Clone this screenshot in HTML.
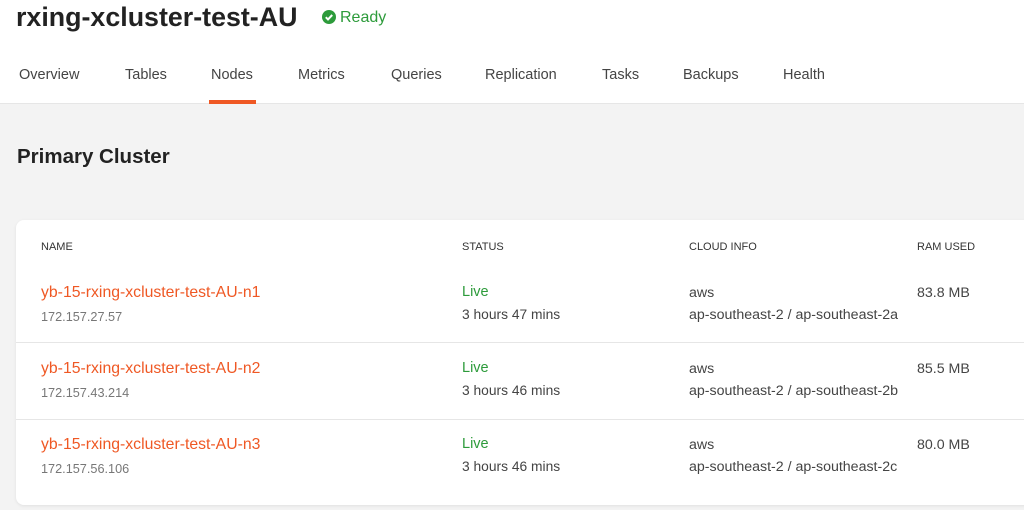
<!DOCTYPE html>
<html><head><style>
*{margin:0;padding:0;box-sizing:border-box}
body{width:1024px;height:510px;overflow:hidden;background:#f3f3f3;font-family:"Liberation Sans",sans-serif;position:relative;color:#333}
.hdr{position:absolute;left:0;top:0;width:1024px;height:104px;background:#fff;border-bottom:1px solid #e6e6e6}
.t{position:absolute;font-size:14px;white-space:nowrap}
.title{left:16px;top:2px;font-size:26.8px;font-weight:bold;color:#222}
.ready{left:340px;top:9px;font-size:16px;color:#2d9b3b}
.tab{top:67px;font-size:14.5px;color:#444}
.ul{position:absolute;left:209px;top:100px;width:47px;height:4px;background:#ef5824}
.h2{left:17px;top:145px;font-size:20.5px;font-weight:bold;color:#222}
.card{position:absolute;left:16px;top:220px;width:1020px;height:285px;background:#fff;border-radius:8px;box-shadow:0 1px 3px rgba(0,0,0,.08)}
.th{font-size:11px;color:#333;top:241px}
.hr{position:absolute;left:16px;width:1010px;height:1px;background:#e6e6e6}
.n{color:#ef5824;font-size:15.8px}
.g{color:#777;font-size:12.7px}
.live{color:#2d9b3b;font-size:14.5px}
.s{font-size:13.8px;color:#444}
.c{font-size:14.2px;color:#444}
</style></head><body>
<div class="hdr"></div>
<div class="t title">rxing-xcluster-test-AU</div>
<svg style="position:absolute;left:322px;top:10px" width="14" height="14" viewBox="0 0 14 14"><circle cx="7" cy="7" r="7" fill="#2d9b3b"/><path d="M3.8 7.2l2.2 2.2 4.2-4.4" stroke="#fff" stroke-width="2" fill="none"/></svg>
<div class="t ready">Ready</div>
<div class="t tab" style="left:19px">Overview</div>
<div class="t tab" style="left:125px">Tables</div>
<div class="t tab" style="left:211px">Nodes</div>
<div class="t tab" style="left:298px">Metrics</div>
<div class="t tab" style="left:391px">Queries</div>
<div class="t tab" style="left:485px">Replication</div>
<div class="t tab" style="left:602px">Tasks</div>
<div class="t tab" style="left:683px">Backups</div>
<div class="t tab" style="left:783px">Health</div>
<div class="ul"></div>
<div class="t h2">Primary Cluster</div>
<div class="card"></div>
<div class="t th" style="left:41px">NAME</div>
<div class="t th" style="left:462px">STATUS</div>
<div class="t th" style="left:689px">CLOUD INFO</div>
<div class="t th" style="left:917px">RAM USED</div>

<div class="t n" style="left:41px;top:284px">yb-15-rxing-xcluster-test-AU-n1</div>
<div class="t g" style="left:41px;top:310px">172.157.27.57</div>
<div class="t live" style="left:462px;top:284px">Live</div>
<div class="t s" style="left:462px;top:307px">3 hours 47 mins</div>
<div class="t c" style="left:689px;top:285px">aws</div>
<div class="t c" style="left:689px;top:307px">ap-southeast-2 / ap-southeast-2a</div>
<div class="t c" style="left:917px;top:285px">83.8 MB</div>
<div class="hr" style="top:342px"></div>

<div class="t n" style="left:41px;top:360px">yb-15-rxing-xcluster-test-AU-n2</div>
<div class="t g" style="left:41px;top:386px">172.157.43.214</div>
<div class="t live" style="left:462px;top:360px">Live</div>
<div class="t s" style="left:462px;top:383px">3 hours 46 mins</div>
<div class="t c" style="left:689px;top:361px">aws</div>
<div class="t c" style="left:689px;top:383px">ap-southeast-2 / ap-southeast-2b</div>
<div class="t c" style="left:917px;top:361px">85.5 MB</div>
<div class="hr" style="top:419px"></div>

<div class="t n" style="left:41px;top:436px">yb-15-rxing-xcluster-test-AU-n3</div>
<div class="t g" style="left:41px;top:462px">172.157.56.106</div>
<div class="t live" style="left:462px;top:436px">Live</div>
<div class="t s" style="left:462px;top:459px">3 hours 46 mins</div>
<div class="t c" style="left:689px;top:437px">aws</div>
<div class="t c" style="left:689px;top:459px">ap-southeast-2 / ap-southeast-2c</div>
<div class="t c" style="left:917px;top:437px">80.0 MB</div>
</body></html>
